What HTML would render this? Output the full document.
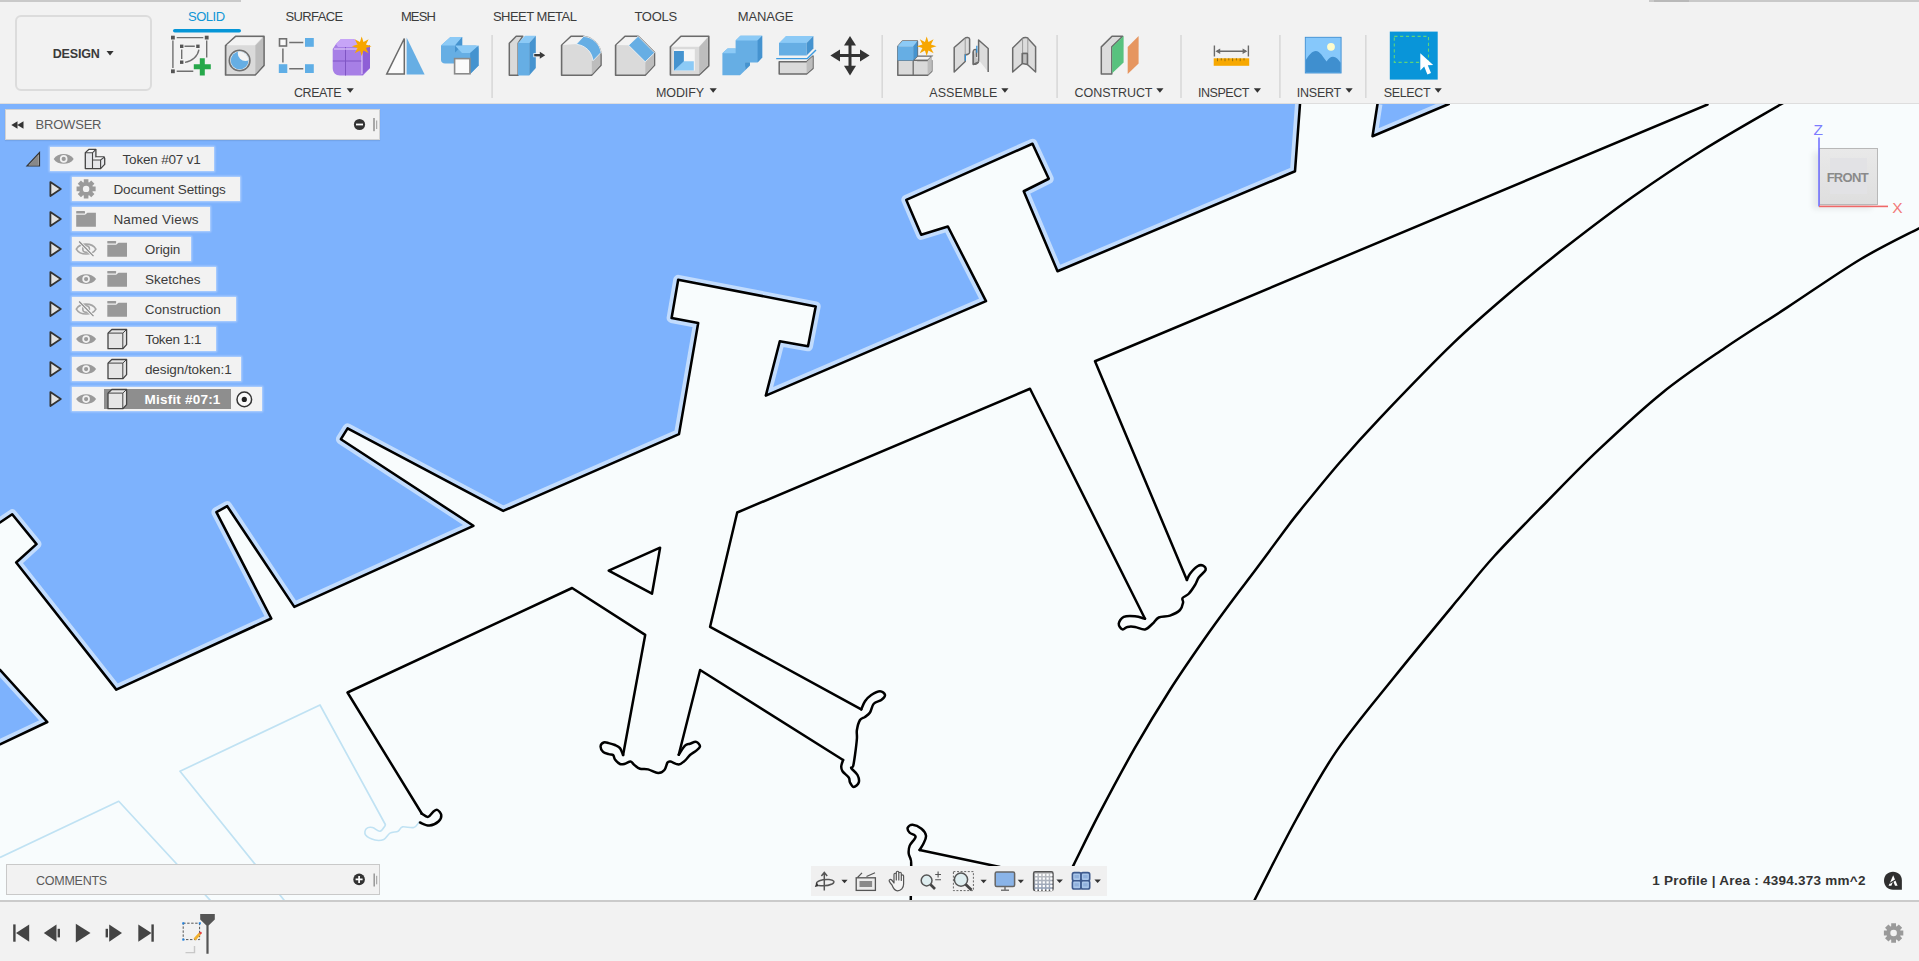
<!DOCTYPE html>
<html><head><meta charset="utf-8"><title>Fusion</title>
<style>
html,body{margin:0;padding:0;}
body{width:1919px;height:961px;overflow:hidden;position:relative;background:#f2f2f2;font-family:"Liberation Sans",sans-serif;}
.abs{position:absolute;left:0;top:0;}
.t{position:absolute;white-space:pre;line-height:1.15;}
.box{position:absolute;box-sizing:border-box;}
</style></head><body>
<svg class="abs" width="1919" height="961" viewBox="0 0 1919 961">
<defs><clipPath id="vpc"><rect x="0" y="104" width="1919" height="796"/></clipPath>
<clipPath id="c1"><path d="M0 104L1300 104L1295 171.25L1057.5 271.25L1023.75 191.25L1048.75 178.75L1032.5 143.75L906.3 199.9L921.2 234.8L947.9 226.5L986 301.2L765.8 395.6L779.8 341.3L808 346.3L815.7 306.4L678.2 279.8L671.6 318L698.2 323L679 434.1L503.2 510.9L347.6 428.4L340.9 439.2L473.4 525.8L294.3 606.9L227.2 506.2L216.4 512.2L271.3 618.5L116.3 689.6L16.2 562.5L36.5 544.1L12.2 514.3L0 522.5Z"/></clipPath>
<clipPath id="c2"><path d="M1377.5 104L1372.5 136.25L1448.75 104Z"/></clipPath>
<clipPath id="c3"><path d="M0 669.9L47.3 722L0 744.3Z"/></clipPath>
</defs><g clip-path="url(#vpc)">
<rect x="0" y="104" width="1919" height="796" fill="#f8fcfd"/>
<path d="M0 104L1300 104L1295 171.25L1057.5 271.25L1023.75 191.25L1048.75 178.75L1032.5 143.75L906.3 199.9L921.2 234.8L947.9 226.5L986 301.2L765.8 395.6L779.8 341.3L808 346.3L815.7 306.4L678.2 279.8L671.6 318L698.2 323L679 434.1L503.2 510.9L347.6 428.4L340.9 439.2L473.4 525.8L294.3 606.9L227.2 506.2L216.4 512.2L271.3 618.5L116.3 689.6L16.2 562.5L36.5 544.1L12.2 514.3L0 522.5Z" fill="#7db2fd"/>
<path d="M1300 104L1295 171.25L1057.5 271.25L1023.75 191.25L1048.75 178.75L1032.5 143.75L906.3 199.9L921.2 234.8L947.9 226.5L986 301.2L765.8 395.6L779.8 341.3L808 346.3L815.7 306.4L678.2 279.8L671.6 318L698.2 323L679 434.1L503.2 510.9L347.6 428.4L340.9 439.2L473.4 525.8L294.3 606.9L227.2 506.2L216.4 512.2L271.3 618.5L116.3 689.6L16.2 562.5L36.5 544.1L12.2 514.3L0 522.5" fill="none" stroke="#c2dcfd" stroke-width="10" stroke-linejoin="round" clip-path="url(#c1)"/>
<path d="M1377.5 104L1372.5 136.25L1448.75 104Z" fill="#7db2fd"/>
<path d="M1377.5 104L1372.5 136.25L1448.75 104" fill="none" stroke="#c2dcfd" stroke-width="10" stroke-linejoin="round" clip-path="url(#c2)"/>
<path d="M0 669.9L47.3 722L0 744.3Z" fill="#7db2fd"/>
<path d="M0 669.9L47.3 722L0 744.3" fill="none" stroke="#c2dcfd" stroke-width="10" stroke-linejoin="round" clip-path="url(#c3)"/>
<path d="M288 905L180 771.25L320 705L385.6 825" fill="none" stroke="#c0e2f3" stroke-width="1.7" stroke-linejoin="round"/>
<path d="M385.6 825C384.67 826.04 382.18 830.83 380 831.25C377.82 831.67 374.79 827.92 372.5 827.5C370.21 827.08 367.4 827.5 366.25 828.75C365.1 830 364.14 833.12 365.6 835C367.06 836.88 371.98 839.27 375 840C378.02 840.73 381.25 840.55 383.75 839.4C386.25 838.25 387.61 834.46 390 833.1C392.39 831.74 396.02 832.28 398.1 831.25C400.18 830.22 399.89 827.52 402.5 826.9C405.11 826.27 410.93 828.33 413.75 827.5C416.57 826.67 418.46 822.83 419.4 821.9" fill="none" stroke="#c0e2f3" stroke-width="1.6" stroke-linejoin="round"/>
<path d="M0 857.5L118.75 801.25L214.6 905" fill="none" stroke="#c0e2f3" stroke-width="1.7" stroke-linejoin="round"/>
<path d="M1300 104L1295 171.25L1057.5 271.25L1023.75 191.25L1048.75 178.75L1032.5 143.75L906.3 199.9L921.2 234.8L947.9 226.5L986 301.2L765.8 395.6L779.8 341.3L808 346.3L815.7 306.4L678.2 279.8L671.6 318L698.2 323L679 434.1L503.2 510.9L347.6 428.4L340.9 439.2L473.4 525.8L294.3 606.9L227.2 506.2L216.4 512.2L271.3 618.5L116.3 689.6L16.2 562.5L36.5 544.1L12.2 514.3L0 522.5" stroke="#000" fill="none" stroke-linejoin="round" stroke-linecap="round" stroke-width="2.55"/>
<path d="M1377.5 104L1372.5 136.25L1448.75 104" stroke="#000" fill="none" stroke-linejoin="round" stroke-linecap="round" stroke-width="2.55"/>
<path d="M0 669.9L47.3 722L0 744.3" stroke="#000" fill="none" stroke-linejoin="round" stroke-linecap="round" stroke-width="2.55"/>
<path d="M420 822.5C421.57 823.02 426.27 825.81 429.4 825.6C432.52 825.39 436.77 823.02 438.75 821.25C440.73 819.48 441.46 816.88 441.25 815C441.04 813.12 438.75 810.62 437.5 810C436.25 809.38 435.32 810.1 433.75 811.25C432.18 812.4 430.08 816.48 428.1 816.9C426.12 817.32 422.93 814.27 421.9 813.75C420.87 813.23 421.9 813.75 421.9 813.75" stroke="#000" fill="none" stroke-linejoin="round" stroke-linecap="round" stroke-width="2.5"/>
<path d="M421.9 813.75L347.5 692.5L572.1 588L645.2 634.9L623.1 755" stroke="#000" fill="none" stroke-linejoin="round" stroke-linecap="round" stroke-width="2.5"/>
<path d="M623.1 755C622.58 753.85 621.35 749.77 620 748.1C618.65 746.43 616.88 745.83 615 745C613.12 744.17 610.62 743.52 608.75 743.1C606.88 742.68 605.11 741.98 603.75 742.5C602.39 743.02 600.71 744.68 600.6 746.25C600.49 747.82 601.74 750.59 603.1 751.9C604.46 753.21 607.08 753.58 608.75 754.1C610.42 754.62 612.06 754.12 613.1 755C614.14 755.88 613.85 757.9 615 759.4C616.15 760.9 618.33 763.27 620 764C621.67 764.73 623.23 764.15 625 763.75C626.77 763.35 629.03 761.39 630.6 761.6C632.17 761.81 632.83 763.81 634.4 765C635.97 766.19 637.72 768.02 640 768.75C642.28 769.48 645.08 768.67 648.1 769.4C651.12 770.12 655.38 773 658.1 773.1C660.82 773.2 662.83 771.77 664.4 770C665.97 768.23 666.47 763.9 667.5 762.5C668.53 761.1 668.73 761.28 670.6 761.6C672.48 761.92 676.35 764.57 678.75 764.4C681.15 764.23 683.12 762.17 685 760.6C686.88 759.03 688.12 756.67 690 755C691.88 753.33 694.58 752.06 696.25 750.6C697.92 749.14 700 747.7 700 746.25C700 744.8 697.92 742.32 696.25 741.9C694.58 741.48 691.88 743.13 690 743.75C688.12 744.37 686.88 743.77 685 745.6C683.12 747.43 679.79 753.18 678.75 754.7" stroke="#000" fill="none" stroke-linejoin="round" stroke-linecap="round" stroke-width="2.5"/>
<path d="M678.75 754.7L700.1 670L843.1 760" stroke="#000" fill="none" stroke-linejoin="round" stroke-linecap="round" stroke-width="2.5"/>
<path d="M861.25 709.4C861.88 708.04 863.33 703.65 865 701.25C866.67 698.85 868.75 696.67 871.25 695C873.75 693.33 877.71 691.25 880 691.25C882.29 691.25 884.79 693.54 885 695C885.21 696.46 883.12 698.54 881.25 700C879.38 701.46 875.62 701.67 873.75 703.75C871.88 705.83 871.46 710.31 870 712.5C868.54 714.69 866.67 715.65 865 716.9C863.33 718.15 861.35 717.82 860 720C858.65 722.18 857.42 726.88 856.9 730C856.38 733.12 857.22 734.58 856.9 738.75C856.58 742.92 855.63 750.42 855 755C854.37 759.58 853.73 764.07 853.1 766.25C852.48 768.43 850.52 766.64 851.25 768.1C851.98 769.56 856.25 772.6 857.5 775C858.75 777.4 859.38 780.52 858.75 782.5C858.12 784.48 855.21 786.9 853.75 786.9C852.29 786.9 850.83 784.07 850 782.5C849.17 780.93 850 779.38 848.75 777.5C847.5 775.62 843.75 773.12 842.5 771.25C841.25 769.38 841.15 768.12 841.25 766.25C841.35 764.38 842.79 761.04 843.1 760" stroke="#000" fill="none" stroke-linejoin="round" stroke-linecap="round" stroke-width="2.5"/>
<path d="M861.25 709.4L710.1 626.8L737.2 512.5L1030 388.75L1145 618.75" stroke="#000" fill="none" stroke-linejoin="round" stroke-linecap="round" stroke-width="2.5"/>
<path d="M1145 618.75C1143.33 618.33 1138.54 616.56 1135 616.25C1131.46 615.94 1126.46 615.65 1123.75 616.9C1121.04 618.15 1118.96 621.67 1118.75 623.75C1118.54 625.83 1121.04 628.88 1122.5 629.4C1123.96 629.92 1125.42 627.32 1127.5 626.9C1129.58 626.48 1132.08 626.48 1135 626.9C1137.92 627.32 1142.08 629.92 1145 629.4C1147.92 628.88 1150.21 625.73 1152.5 623.75C1154.79 621.77 1155.83 618.86 1158.75 617.5C1161.67 616.14 1166.46 616.85 1170 615.6C1173.54 614.35 1177.82 612.18 1180 610C1182.18 607.82 1182.68 604.48 1183.1 602.5C1183.52 600.52 1181.56 599.56 1182.5 598.1C1183.44 596.64 1186.67 595.93 1188.75 593.75C1190.83 591.57 1193.33 587.71 1195 585C1196.67 582.29 1196.98 580 1198.75 577.5C1200.52 575 1204.88 571.98 1205.6 570C1206.32 568.02 1204.45 566.23 1203.1 565.6C1201.75 564.98 1199.68 564.89 1197.5 566.25C1195.32 567.61 1191.77 571.46 1190 573.75C1188.23 576.04 1187.42 578.96 1186.9 580" stroke="#000" fill="none" stroke-linejoin="round" stroke-linecap="round" stroke-width="2.5"/>
<path d="M1186.9 580L1095 361.25L1707.5 104.5" stroke="#000" fill="none" stroke-linejoin="round" stroke-linecap="round" stroke-width="2.5"/>
<path d="M608.7 570.7L660.1 547.7L652 593.7Z" stroke="#000" fill="none" stroke-linejoin="round" stroke-linecap="round" stroke-width="2.5"/>
<path d="M910.7 905C910.78 898.4 911.2 872.98 911.2 865.4C911.2 857.82 911.12 861.48 910.7 859.5C910.28 857.52 908.87 855.82 908.7 853.5C908.53 851.18 908.55 848.4 909.7 845.6C910.85 842.8 915.6 838.84 915.6 836.7C915.6 834.56 911.02 834.23 909.7 832.75C908.38 831.27 907.22 829.12 907.7 827.8C908.18 826.47 910.3 824.63 912.6 824.8C914.9 824.97 919.27 826.98 921.5 828.8C923.73 830.62 925.67 833.23 926 835.7C926.33 838.17 924.57 841.22 923.5 843.6C922.43 845.98 920.25 848.93 919.6 850" stroke="#000" fill="none" stroke-linejoin="round" stroke-linecap="round" stroke-width="2.5"/>
<path d="M919.6 850L1000 867" stroke="#000" fill="none" stroke-linejoin="round" stroke-linecap="round" stroke-width="2.5"/>
<path d="M1790 99C1788.28 100 1794.18 96.5 1779.7 105C1765.22 113.5 1727.52 134.73 1703.1 150C1678.68 165.27 1655.97 180.5 1633.2 196.6C1610.43 212.7 1586.5 231.05 1566.5 246.6C1546.5 262.15 1532.07 273.8 1513.2 289.9C1494.33 306 1475.5 321.83 1453.3 343.2C1431.1 364.57 1398.92 398.22 1380 418.1C1361.08 437.98 1353.08 447.08 1339.75 462.5C1326.42 477.92 1309.12 499.35 1300 510.6C1290.88 521.85 1292.43 520.1 1285 530C1277.57 539.9 1264.12 558.33 1255.4 570C1246.68 581.67 1241.32 588.33 1232.7 600C1224.08 611.67 1214.17 625 1203.7 640C1193.23 655 1181.4 671.97 1169.9 690C1158.4 708.03 1146.43 727.67 1134.7 748.2C1122.97 768.73 1109.65 793.8 1099.5 813.2C1089.35 832.6 1078.72 854.8 1073.8 864.6C1068.88 874.4 1070.63 870.77 1070 872" stroke="#000" fill="none" stroke-linejoin="round" stroke-linecap="round" stroke-width="2.5"/>
<path d="M1930 223C1928.17 223.88 1930.65 222.22 1919 228.3C1907.35 234.38 1882.05 246.32 1860.1 259.5C1838.15 272.68 1809.85 292.65 1787.3 307.4C1764.75 322.15 1745.62 333.78 1724.8 348C1703.98 362.22 1683.45 375.72 1662.4 392.7C1641.35 409.68 1617.82 431.68 1598.5 449.9C1579.18 468.12 1563.85 484.32 1546.5 502C1529.15 519.68 1509.23 539.67 1494.4 556C1479.57 572.33 1474.32 579.67 1457.5 600C1440.68 620.33 1413.53 653.02 1393.5 678C1373.47 702.98 1353.43 726.48 1337.3 749.9C1321.17 773.32 1310.48 793.48 1296.7 818.5C1282.92 843.52 1262.38 884.75 1254.6 900C1246.82 915.25 1250.77 908.33 1250 910" stroke="#000" fill="none" stroke-linejoin="round" stroke-linecap="round" stroke-width="2.5"/>
</g></svg>
<div class="box" style="left:0;top:0;width:1919px;height:104px;background:#f2f2f2;border-bottom:1px solid #dedede"></div>
<div class="box" style="left:0;top:0;width:241px;height:2px;background:#c9c9c9"></div>
<div class="box" style="left:1649px;top:0;width:270px;height:2px;background:#c9c9c9"></div>
<div class="box" style="left:1654px;top:0;width:35px;height:2px;background:#b9b9b9"></div>
<div class="box" style="left:14.5px;top:15px;width:137px;height:76px;border:2px solid #dcdcdc;border-radius:6px"></div>
<div class="box" style="left:5px;top:109px;width:375px;height:31px;background:#f2f2f2;border:1px solid #d2d2d2;box-shadow:0 1px 1px rgba(0,0,0,0.08)"></div>
<div class="box" style="left:50.0px;top:146.9px;width:163.8px;height:24.4px;background:#f2f2f2;box-shadow:0 0 2px 1px rgba(230,240,255,0.55)"></div>
<div class="box" style="left:72.3px;top:176.9px;width:167.3px;height:24.4px;background:#f2f2f2;box-shadow:0 0 2px 1px rgba(230,240,255,0.55)"></div>
<div class="box" style="left:72.3px;top:206.9px;width:137.5px;height:24.4px;background:#f2f2f2;box-shadow:0 0 2px 1px rgba(230,240,255,0.55)"></div>
<div class="box" style="left:72.3px;top:236.9px;width:118.7px;height:24.4px;background:#f2f2f2;box-shadow:0 0 2px 1px rgba(230,240,255,0.55)"></div>
<div class="box" style="left:72.3px;top:266.9px;width:143.7px;height:24.4px;background:#f2f2f2;box-shadow:0 0 2px 1px rgba(230,240,255,0.55)"></div>
<div class="box" style="left:72.3px;top:296.9px;width:163.7px;height:24.4px;background:#f2f2f2;box-shadow:0 0 2px 1px rgba(230,240,255,0.55)"></div>
<div class="box" style="left:72.3px;top:326.9px;width:143.7px;height:24.4px;background:#f2f2f2;box-shadow:0 0 2px 1px rgba(230,240,255,0.55)"></div>
<div class="box" style="left:72.3px;top:356.9px;width:168.7px;height:24.4px;background:#f2f2f2;box-shadow:0 0 2px 1px rgba(230,240,255,0.55)"></div>
<div class="box" style="left:72.3px;top:386.9px;width:189.7px;height:24.4px;background:#f2f2f2;box-shadow:0 0 2px 1px rgba(230,240,255,0.55)"></div>
<div class="box" style="left:104.2px;top:389.4px;width:126.6px;height:19.4px;background:#8e8e8e"></div>
<div class="box" style="left:1819px;top:147.5px;width:58.5px;height:57.5px;background:linear-gradient(#e9e9e9,#dedede);border:1px solid #b8b8b8;box-shadow:-6px 4px 6px rgba(0,0,0,0.08)"></div>
<div class="box" style="left:1830px;top:158px;width:37px;height:36px;background:#e2e2e5"></div>
<div class="box" style="left:5.5px;top:864.2px;width:374px;height:30.4px;background:#f2f2f2;border:1px solid #c9c9c9"></div>
<div class="box" style="left:811px;top:866px;width:296px;height:30px;background:#f0f0f0"></div>
<div class="box" style="left:0;top:900px;width:1919px;height:61px;background:#f2f2f2;border-top:2px solid #cbcbcb"></div>
<svg class="abs" width="1919" height="961" viewBox="0 0 1919 961">
<path d="M106.5 51H113.6L110.05 55.6Z" fill="#333"/>
<rect x="173" y="29" width="68" height="3.6" rx="1.8" fill="#0696d7"/>
<path d="M346.60 88.2H353.80L350.20 92.8Z" fill="#333"/>
<path d="M709.60 88.2H716.80L713.20 92.8Z" fill="#333"/>
<path d="M1001.30 88.2H1008.50L1004.90 92.8Z" fill="#333"/>
<path d="M1156.30 88.2H1163.50L1159.90 92.8Z" fill="#333"/>
<path d="M1253.80 88.2H1261.00L1257.40 92.8Z" fill="#333"/>
<path d="M1345.50 88.2H1352.70L1349.10 92.8Z" fill="#333"/>
<path d="M1434.60 88.2H1441.80L1438.20 92.8Z" fill="#333"/>
<rect x="491.3" y="35" width="1.6" height="63" fill="#d9d9d9"/>
<rect x="881.4" y="35" width="1.6" height="63" fill="#d9d9d9"/>
<rect x="1056.3" y="35" width="1.6" height="63" fill="#d9d9d9"/>
<rect x="1180.2" y="35" width="1.6" height="63" fill="#d9d9d9"/>
<rect x="1279.1" y="35" width="1.6" height="63" fill="#d9d9d9"/>
<rect x="1365.0" y="35" width="1.6" height="63" fill="#d9d9d9"/>
<g>
<path d="M176.7 37.6H203.3M172.9 40.5V68M206.7 40.5V57.6M176.7 71.3H193.3M184.5 46.3H194.8M181.7 49.5V59" stroke="#707070" stroke-width="1.4" fill="none"/>
<path d="M198.9 49.7C198 56 192 61.5 185 62.4" stroke="#707070" stroke-width="1.4" fill="none"/>
<g fill="#555"><rect x="171" y="35.7" width="3.8" height="3.8"/><rect x="204.8" y="35.7" width="3.8" height="3.8"/><rect x="171" y="69.4" width="3.8" height="3.8"/>
<rect x="180" y="44.6" width="3.4" height="3.4"/><rect x="196.2" y="44.6" width="3.4" height="3.4"/><rect x="180" y="60.5" width="3.4" height="3.4"/></g>
<path d="M193.8 66.8H210.8M202.3 58.3V75.5" stroke="#26a84a" stroke-width="5"/>
</g>
<g>
<path d="M225.6 45.6L235.6 36.4H264V65.4L255.2 75H225.6Z" fill="#dadada" stroke="#6b6b6b" stroke-width="1.7" stroke-linejoin="round"/>
<path d="M226.6 45.2L236 37.3H262.5L254.9 45.2Z" fill="#f3f3f3"/>
<path d="M255.4 45.6L263.2 37.4V65L255.4 73.9Z" fill="#bdbdbd"/>
<circle cx="239.6" cy="60.5" r="10.3" fill="#f2f2f2" stroke="#707070" stroke-width="1.6"/>
<clipPath id="ex2"><circle cx="239.6" cy="60.5" r="8.9"/></clipPath>
<circle cx="239.6" cy="60.5" r="8.9" fill="#66aee4"/>
<circle cx="245.4" cy="53.4" r="7.6" fill="#f4f4f4" clip-path="url(#ex2)"/>
</g>
<g>
<path d="M289.2 42.6H303.3M282.9 48.4V62.6M289.2 68.8H303.3" stroke="#707070" stroke-width="1.5"/>
<rect x="279.5" y="38.8" width="7" height="7.2" fill="#fafafa" stroke="#707070" stroke-width="1.6"/>
<rect x="305" y="38" width="8.8" height="8.8" fill="#5faee6"/>
<rect x="278.8" y="64.2" width="8.5" height="8.8" fill="#5faee6"/>
<rect x="305" y="64.2" width="8.8" height="8.8" fill="#5faee6"/>
</g>
<g>
<path d="M336 44L341 39H352C355 39 357 41 357 44V49L370 49V68L363 75.5H340C335.5 75.5 332.7 72.5 332.7 68V49Z" fill="#a77fe6"/>
<path d="M336 44L341 39H352C355 39 357 41 357 44V47H338Z" fill="#c6a4f7"/>
<path d="M362 49L370 45V68L362 75Z" fill="#8e5fd6"/>
<path d="M332.9 61H362M345.5 47V75.5" stroke="#7f55c4" stroke-width="1"/>
<path d="M334 49H362V74" stroke="#e6d6fb" stroke-width="1" fill="none"/>
<polygon points="361.70,36.50 363.46,42.05 368.63,39.37 365.95,44.54 371.50,46.30 365.95,48.06 368.63,53.23 363.46,50.55 361.70,56.10 359.94,50.55 354.77,53.23 357.45,48.06 351.90,46.30 357.45,44.54 354.77,39.37 359.94,42.05" fill="#f7a600"/>
</g>
<g>
<path d="M386.8 73.9L404.3 38.5V73.9Z" fill="#fbfbfb" stroke="#6b6b6b" stroke-width="1.5" stroke-linejoin="miter"/>
<path d="M406.6 37.4L424.6 74.4H406.6Z" fill="#66aee4"/>
</g>
<g>
<path d="M441 45.5L450.4 36.9H462.2V45.5H475C477 45.5 478.6 47 478.6 49V65.5L470.2 74V58H461.6V63.6H445C442.8 63.6 441 62 441 60Z" fill="#66aee4"/>
<path d="M441 45.5L450.4 36.9H462.2L455 45.5Z" fill="#8ccaf6"/>
<path d="M462.2 36.9V45.5L455 52.5V45.5Z" fill="#4593cf"/>
<path d="M455 45.5H478.6L470.2 53H462Z" fill="#8ccaf6"/>
<path d="M470.2 53L478.6 45.5V65.5L470.2 74Z" fill="#4593cf"/>
<rect x="454.6" y="58.6" width="15.3" height="15.2" fill="#fafafa" stroke="#8a8a8a" stroke-width="1.6"/>
</g>
<g>
<path d="M509.3 75.2V43.2L516.2 36.2H522.8L518.2 43.2V75.2Z" fill="#dadada" stroke="#6b6b6b" stroke-width="1.5" stroke-linejoin="round"/>
<path d="M518 43L525 35.8H535.8L529.2 43Z" fill="#8ccaf6"/>
<path d="M518 43H529.2V75.5H518Z" fill="#66aee4"/>
<path d="M529.2 43L535.8 35.8V67.9L529.2 75.5Z" fill="#4593cf"/>
<path d="M533.4 55.2H541" stroke="#fafafa" stroke-width="4"/>
<path d="M534.2 55.2H541" stroke="#3a3a3a" stroke-width="2.4"/>
<path d="M539.8 51.7L545.2 55.2L539.8 58.7Z" fill="#3a3a3a"/>
</g>
<g>
<path d="M561.6 75.3V45.3L571 36.2H583C592 37 600.5 45 601 55V65.3L591.6 75.3Z" fill="#dadada" stroke="#6b6b6b" stroke-width="1.6" stroke-linejoin="round"/>
<path d="M562.6 45L571.4 37.2H583L577 44Z" fill="#f3f3f3"/>
<path d="M591.8 61L600.3 53V65L591.8 74.4Z" fill="#bdbdbd"/>
<path d="M576.3 44.2L583.5 36.4C592.5 37 600 44 601 52.5L593 60.8C592 52 586 45.5 576.3 44.2Z" fill="#66aee4" stroke="#f5f5f5" stroke-width="0.8"/>
</g>
<g>
<path d="M615.6 75.3V45.3L625 36.2H638.2L654.5 52.6V65.3L645.2 75.3Z" fill="#dadada" stroke="#6b6b6b" stroke-width="1.6" stroke-linejoin="round"/>
<path d="M616.6 45L625.4 37.2H637.6L628.6 45.2Z" fill="#f3f3f3"/>
<path d="M645.4 61.8L654 53V65L645.4 74.4Z" fill="#bdbdbd"/>
<path d="M628.6 45.3L638.1 36.3L654.5 52.8L645.2 61.8Z" fill="#66aee4" stroke="#f5f5f5" stroke-width="0.8"/>
</g>
<g>
<path d="M670.4 75V46.9L680.9 36.2H708.8V65.8L699.2 75Z" fill="#dadada" stroke="#6b6b6b" stroke-width="1.6" stroke-linejoin="round"/>
<path d="M671.4 46.7L681.3 37.2H707.5L699 46.7Z" fill="#f4f4f4"/>
<path d="M699.2 46.9L707.9 37.4V65.5L699.2 74.2Z" fill="#bdbdbd"/>
<rect x="673.8" y="49.2" width="21" height="21.4" fill="#f6f6f6"/>
<path d="M674 70.4V51H683.8V61.2H693.8V70.4Z" fill="#8ccaf6"/>
<path d="M674 51H683.8V61.2L674 70.4Z" fill="#4593cf"/>
</g>
<g>
<path d="M722.4 75.2V53.2L727.6 48.6H735.6V40.6L740.4 35.8H762.2V57.4L757.4 62.4H745.2V70.2L740 75.2Z" fill="#66aee4"/>
<path d="M722.4 53.2L727.6 48.6H735.6V53.2Z" fill="#8ccaf6"/>
<path d="M735.6 40.6L740.4 35.8H762.2L757.6 40.6Z" fill="#8ccaf6"/>
<path d="M757.6 40.6L762.2 35.8V57.4L757.6 62.4Z" fill="#4593cf"/>
<path d="M745.2 62.4H750L745.2 67Z" fill="#4593cf"/>
<path d="M745.2 62.4L750 62.4V65.5L745.2 70.2Z" fill="#4593cf"/>
</g>
<g>
<path d="M779.2 61.8H806.6L813 56V68.4L806.6 74H779.2Z" fill="#dadada" stroke="#6b6b6b" stroke-width="1.5" stroke-linejoin="round"/>
<path d="M806.6 62L812.6 56.4V68.2L806.6 73.4Z" fill="#bdbdbd"/>
<path d="M779 42.9L785.9 35.9H813.4L806.6 42.9Z" fill="#8ccaf6"/>
<rect x="779" y="42.9" width="27.6" height="12.6" fill="#66aee4"/>
<path d="M806.6 42.9L813.4 35.9V48.6L806.6 55.5Z" fill="#4593cf"/>
<path d="M776.2 58.6H807.4L816 50" stroke="#3d9be0" stroke-width="1.4" fill="none"/>
</g>
<g fill="#333">
<rect x="848.5" y="43" width="3" height="25"/><rect x="837.5" y="54" width="25" height="3"/>
<path d="M844 45.5L850 36L856 45.5Z"/><path d="M844 65.7L850 75.5L856 65.7Z"/>
<path d="M840 49.6L830.4 55.5L840 61.4Z"/><path d="M860 49.6L869.6 55.5L860 61.4Z"/>
</g>
<g>
<path d="M897.8 75.3V46.4L902.6 41.1H917.4V60.4H931.8V71.1L927.6 75.3Z" fill="#dadada" stroke="#6b6b6b" stroke-width="1.5" stroke-linejoin="round"/>
<path d="M913.2 60.4L917.6 56.1H931.9L927.6 60.4Z" fill="#f3f3f3" stroke="#6b6b6b" stroke-width="1.2"/>
<path d="M927.6 60.4L931.9 56.1V71.1L927.6 75.3Z" fill="#bdbdbd"/>
<path d="M913.2 60.4V75.3M897.8 60.4H927.6" stroke="#6b6b6b" stroke-width="1.3"/>
<rect x="897.6" y="46.3" width="15.6" height="14.2" fill="#66aee4"/>
<path d="M897.6 46.3L902.4 41.1H917.4L913.2 46.3Z" fill="#8ccaf6"/>
<path d="M913.2 46.3L917.4 41.1V56L913.2 60.5Z" fill="#4593cf"/>
<polygon points="926.70,36.50 928.46,42.05 933.63,39.37 930.95,44.54 936.50,46.30 930.95,48.06 933.63,53.23 928.46,50.55 926.70,56.10 924.94,50.55 919.77,53.23 922.45,48.06 916.90,46.30 922.45,44.54 919.77,39.37 924.94,42.05" fill="#f7a600"/>
</g>
<g stroke="#6b6b6b" stroke-width="1.5" stroke-linejoin="round">
<path d="M954.2 72V47.5L964.8 38.3C966 37.2 969.6 37.2 969.6 39V52.5C969.6 54 966.5 54.8 965.2 54.6V61.5L954.2 72Z" fill="#dcdcdc"/>
<path d="M965.2 54.6V38.5" stroke="#9a9a9a" stroke-width="1"/>
<path d="M988.2 72V48.5L978.6 40V61.6C978.6 63.5 975 64.5 973.3 64V51.5C973.3 49.5 975 49.2 976.4 49.6V57" fill="#dcdcdc"/>
<path d="M973.3 51.5V64.5L978.6 62" fill="#c4c4c4"/>
</g>
<path d="M965.4 54.5V60.8M976.8 45.8V52.8" stroke="#2f8fd6" stroke-width="1.2"/>
<g stroke="#6b6b6b" stroke-width="1.5" stroke-linejoin="round">
<path d="M1012.7 72V48L1022.6 38.3C1023.6 37.2 1028 37.2 1028 38.6L1035.6 46.8V72L1027.4 64.5V53.5H1022.4V63.5Z" fill="#dcdcdc"/>
<path d="M1022.6 38.6V53.4M1027.8 38.8V53" stroke="#9a9a9a" stroke-width="1"/>
<path d="M1022.4 53.5H1027.4V64.5L1022.4 63.5Z" fill="#c2c2c2"/>
</g>
<g>
<path d="M1101.3 73.9V46.9L1112 36.3H1122.6L1111.8 46.9V73.9Z" fill="#dcdcdc" stroke="#6b6b6b" stroke-width="1.5" stroke-linejoin="round"/>
<path d="M1112.2 46.9L1123.6 36V62.4L1112.2 73.3Z" fill="#58c27e"/>
<path d="M1127.7 46.9L1138.6 36V63.6L1127.7 73.9Z" fill="#e69660"/>
</g>
<g>
<path d="M1214.4 45.4V56.6M1248.4 45.4V56.6M1217 51.3H1246" stroke="#6a6a6a" stroke-width="1.4"/>
<path d="M1215.4 51.3L1220.2 48.6V54Z M1247.4 51.3L1242.6 48.6V54Z" fill="#6a6a6a"/>
<rect x="1213.7" y="58.3" width="35.5" height="7.5" fill="#f7a800"/>
<path d="M1217.5 58.3V61.2M1221.3 58.3V60.4M1225 58.3V61.2M1228.8 58.3V60.4M1232.6 58.3V61.2M1236.4 58.3V60.4M1240.2 58.3V61.2M1244 58.3V60.4" stroke="#8a6a10" stroke-width="0.9"/>
</g>
<g>
<rect x="1305.3" y="37.3" width="35.8" height="35.7" fill="#86c8fb" stroke="#3f8ed2" stroke-width="0.9"/>
<path d="M1305.8 60C1309 55 1312 51 1315.8 51C1320 51 1323 57 1326.6 61.6C1328.5 58.5 1330.5 56.8 1333 56.8C1336 56.8 1338.6 59.5 1340.6 62.8V72.5H1305.8Z" fill="#3f8fcf"/>
<circle cx="1331" cy="46.8" r="3.9" fill="#fdfccc"/>
</g>
<g>
<rect x="1389.8" y="31.6" width="47.9" height="48" fill="#0995d9"/>
<rect x="1394.3" y="36.4" width="34.2" height="26" fill="none" stroke="#5fd47a" stroke-width="1.1" stroke-dasharray="3.2 2.6"/>
<path d="M1420.3 53.2V70.4L1424.2 66.6L1427.4 74.5L1431 73L1427.8 65.2L1433.2 65Z" fill="#fff"/>
</g>
<path d="M11.3 125L17.5 121.3V128.7ZM17.3 125L23.5 121.3V128.7Z" fill="#333"/>
<circle cx="359.5" cy="124.5" r="5.6" fill="#333"/><rect x="356" y="123.6" width="7" height="1.8" fill="#fff"/>
<rect x="373.4" y="118" width="1.2" height="13.2" fill="#777"/><rect x="376.2" y="120.5" width="1" height="8.5" fill="#999"/>
<path d="M27 166L39.5 152.5V166Z" fill="#b9b9b9" stroke="#333" stroke-width="1.2"/>
<path d="M28.5 165L38.5 155V165Z" fill="#888"/>
<g><path d="M53.70 158.90C57.70 152.40 69.70 152.40 73.70 158.90C69.70 165.40 57.70 165.40 53.70 158.90Z" fill="#9a9a9a"/><circle cx="63.70" cy="158.90" r="3.8" fill="#f2f2f2"/><circle cx="63.70" cy="158.90" r="2.1" fill="#9a9a9a"/></g>
<path d="M85.3 152.8L89.1 149.3H95.9V156.9H103.8L104.7 158.4V164.4L100.6 168.6H85.3Z" fill="#e6e7ea" stroke="#454545" stroke-width="1.3" stroke-linejoin="round"/>
<path d="M86 152.9H92.4L95.3 150H89.4Z M92.6 160.1H100.6L104 157.4H96Z" fill="#fafafa"/>
<path d="M85.3 152.8H92.5L95.9 149.3M92.5 152.8V168.6M92.5 160H100.6L104.7 156.9M100.6 160V168.6" stroke="#454545" stroke-width="1.1" fill="none"/>
<path d="M50.4 182.10L60.8 189.10L50.4 196.10Z" fill="#e3e3e3" stroke="#333" stroke-width="1.8" stroke-linejoin="round"/>
<path d="M50.4 212.10L60.8 219.10L50.4 226.10Z" fill="#e3e3e3" stroke="#333" stroke-width="1.8" stroke-linejoin="round"/>
<path d="M50.4 242.10L60.8 249.10L50.4 256.10Z" fill="#e3e3e3" stroke="#333" stroke-width="1.8" stroke-linejoin="round"/>
<path d="M50.4 272.10L60.8 279.10L50.4 286.10Z" fill="#e3e3e3" stroke="#333" stroke-width="1.8" stroke-linejoin="round"/>
<path d="M50.4 302.10L60.8 309.10L50.4 316.10Z" fill="#e3e3e3" stroke="#333" stroke-width="1.8" stroke-linejoin="round"/>
<path d="M50.4 332.10L60.8 339.10L50.4 346.10Z" fill="#e3e3e3" stroke="#333" stroke-width="1.8" stroke-linejoin="round"/>
<path d="M50.4 362.10L60.8 369.10L50.4 376.10Z" fill="#e3e3e3" stroke="#333" stroke-width="1.8" stroke-linejoin="round"/>
<path d="M50.4 392.10L60.8 399.10L50.4 406.10Z" fill="#e3e3e3" stroke="#333" stroke-width="1.8" stroke-linejoin="round"/>
<polygon points="83.80,182.29 83.80,179.37 88.40,179.37 88.40,182.29 89.15,182.60 91.21,180.54 94.46,183.79 92.40,185.85 92.71,186.60 95.63,186.60 95.63,191.20 92.71,191.20 92.40,191.95 94.46,194.01 91.21,197.26 89.15,195.20 88.40,195.51 88.40,198.43 83.80,198.43 83.80,195.51 83.05,195.20 80.99,197.26 77.74,194.01 79.80,191.95 79.49,191.20 76.57,191.20 76.57,186.60 79.49,186.60 79.80,185.85 77.74,183.79 80.99,180.54 83.05,182.60" fill="#9a9a9a"/><circle cx="86.10" cy="188.90" r="3.20" fill="#f2f2f2"/>
<path d="M76.20 214.70H85.00L87.40 212.80H95.90V226.70H76.20Z" fill="#999"/><rect x="76.20" y="210.90" width="8.8" height="2.6" rx="0.6" fill="#999"/>
<g fill="none" stroke="#a4a4a4" stroke-width="1.6"><path d="M76.30 249.10C80.10 242.50 92.10 242.50 95.90 249.10C92.10 255.70 80.10 255.70 76.30 249.10Z"/><circle cx="86.10" cy="249.10" r="3.3"/></g><path d="M79.10 241.50L93.50 256.10" stroke="#f2f2f2" stroke-width="3"/><path d="M79.10 241.50L93.50 256.10" stroke="#8a8a8a" stroke-width="1.2"/>
<path d="M107.30 244.70H116.10L118.50 242.80H127.00V256.70H107.30Z" fill="#999"/><rect x="107.30" y="240.90" width="8.8" height="2.6" rx="0.6" fill="#999"/>
<g><path d="M76.10 279.10C80.10 272.60 92.10 272.60 96.10 279.10C92.10 285.60 80.10 285.60 76.10 279.10Z" fill="#9a9a9a"/><circle cx="86.10" cy="279.10" r="3.8" fill="#f2f2f2"/><circle cx="86.10" cy="279.10" r="2.1" fill="#9a9a9a"/></g>
<path d="M107.30 274.70H116.10L118.50 272.80H127.00V286.70H107.30Z" fill="#999"/><rect x="107.30" y="270.90" width="8.8" height="2.6" rx="0.6" fill="#999"/>
<g fill="none" stroke="#a4a4a4" stroke-width="1.6"><path d="M76.30 309.10C80.10 302.50 92.10 302.50 95.90 309.10C92.10 315.70 80.10 315.70 76.30 309.10Z"/><circle cx="86.10" cy="309.10" r="3.3"/></g><path d="M79.10 301.50L93.50 316.10" stroke="#f2f2f2" stroke-width="3"/><path d="M79.10 301.50L93.50 316.10" stroke="#8a8a8a" stroke-width="1.2"/>
<path d="M107.30 304.70H116.10L118.50 302.80H127.00V316.70H107.30Z" fill="#999"/><rect x="107.30" y="300.90" width="8.8" height="2.6" rx="0.6" fill="#999"/>
<g><path d="M76.10 339.10C80.10 332.60 92.10 332.60 96.10 339.10C92.10 345.60 80.10 345.60 76.10 339.10Z" fill="#9a9a9a"/><circle cx="86.10" cy="339.10" r="3.8" fill="#f2f2f2"/><circle cx="86.10" cy="339.10" r="2.1" fill="#9a9a9a"/></g>
<path d="M108.00 333.10L111.80 329.50H126.60V344.60L122.80 348.70H108.00Z" fill="#e6e6e6" stroke="#444" stroke-width="1.3" stroke-linejoin="round"/><path d="M108.00 333.10H122.80L126.60 329.50M122.80 333.10V348.70" stroke="#444" stroke-width="1" fill="none"/>
<g><path d="M76.10 369.10C80.10 362.60 92.10 362.60 96.10 369.10C92.10 375.60 80.10 375.60 76.10 369.10Z" fill="#9a9a9a"/><circle cx="86.10" cy="369.10" r="3.8" fill="#f2f2f2"/><circle cx="86.10" cy="369.10" r="2.1" fill="#9a9a9a"/></g>
<path d="M108.00 363.10L111.80 359.50H126.60V374.60L122.80 378.70H108.00Z" fill="#e6e6e6" stroke="#444" stroke-width="1.3" stroke-linejoin="round"/><path d="M108.00 363.10H122.80L126.60 359.50M122.80 363.10V378.70" stroke="#444" stroke-width="1" fill="none"/>
<g><path d="M76.10 399.10C80.10 392.60 92.10 392.60 96.10 399.10C92.10 405.60 80.10 405.60 76.10 399.10Z" fill="#9a9a9a"/><circle cx="86.10" cy="399.10" r="3.8" fill="#f2f2f2"/><circle cx="86.10" cy="399.10" r="2.1" fill="#9a9a9a"/></g>
<path d="M108.00 393.10L111.80 389.50H126.60V404.60L122.80 408.70H108.00Z" fill="#e6e6e6" stroke="#444" stroke-width="1.3" stroke-linejoin="round"/><path d="M108.00 393.10H122.80L126.60 389.50M122.80 393.10V408.70" stroke="#444" stroke-width="1" fill="none"/>
<circle cx="244.3" cy="399.4" r="7.3" fill="#fafafa" stroke="#333" stroke-width="1.5"/><circle cx="244.3" cy="399.4" r="2.6" fill="#222"/>
<rect x="1818.2" y="137.5" width="1.6" height="69" fill="#7474ff"/>
<rect x="1819" y="205.6" width="69" height="1.6" fill="#ef6868"/>
<circle cx="359.1" cy="879.4" r="5.8" fill="#333"/><path d="M355.6 879.4H362.6M359.1 875.9V882.9" stroke="#fff" stroke-width="1.7"/>
<rect x="373.6" y="873.5" width="1.1" height="13" fill="#777"/><rect x="376.2" y="875.8" width="1" height="8.5" fill="#999"/>
<g fill="none" stroke="#555" stroke-width="1.5">
<path d="M824.3 872.5V890.5M821.4 876L824.3 872.5L827.2 876" />
<path d="M817 884.4C814.5 881.5 822 879 829 879.5C834 880 835.5 882 832 884C829 885.5 823 886 818.5 885.5" />
</g><path d="M816.5 882.5L814.8 887L819 886Z" fill="#333"/>
<path d="M841.4 879.8H847.6L844.5 883.3Z" fill="#333"/>
<g><rect x="856.2" y="877.8" width="19.2" height="12.6" fill="#ececec" stroke="#555" stroke-width="1.3"/>
<rect x="859.5" y="881" width="12.6" height="6" fill="#8a8a8a"/><path d="M857.5 877.5L862 872.8M866.5 876.5L875 872.8" stroke="#555" stroke-width="1.2"/></g>
<path d="M892 885C889 882 888.5 880 890 879.5C891.5 879 893 881.5 894 883V874.5C894 872.8 896.3 872.8 896.3 874.5V880V872.5C896.3 870.8 898.8 870.8 898.8 872.5V880V873.5C898.8 871.8 901.3 871.8 901.3 873.5V880.5V876C901.3 874.5 903.6 874.5 903.6 876V884C903.6 888 901 890.8 897.5 890.8C895 890.8 893.5 889 892 885Z" fill="#f5f5f5" stroke="#555" stroke-width="1.2" stroke-linejoin="round"/>
<g><circle cx="926.6" cy="880.5" r="5.4" fill="#dfeef0" stroke="#555" stroke-width="1.5"/><path d="M930.5 884.5L935 889" stroke="#444" stroke-width="2.6"/>
<path d="M935.2 874.5H941M938.1 871.6V877.4M935.2 879.8H941" stroke="#555" stroke-width="1.1"/></g>
<g><rect x="953.4" y="871.6" width="20" height="19" fill="none" stroke="#666" stroke-width="1" stroke-dasharray="2 1.6"/>
<circle cx="961" cy="879.6" r="6.6" fill="#dfeef0" stroke="#555" stroke-width="1.5"/><path d="M965.5 884.2L971.5 890" stroke="#444" stroke-width="2.8"/></g>
<path d="M980.5 879.8H986.7L983.6 883.3Z" fill="#333"/>
<g><rect x="995.2" y="872" width="19.4" height="14.6" rx="1.5" fill="#8ab4e8" stroke="#666" stroke-width="1.5"/><path d="M1001 890.2H1009M1005 887V890" stroke="#777" stroke-width="1.6"/></g>
<path d="M1017.7 879.8H1023.9L1020.8 883.3Z" fill="#333"/>
<defs><linearGradient id="gg" x1="0" y1="0" x2="0" y2="1"><stop offset="0" stop-color="#c4c4c4"/><stop offset="1" stop-color="#8e9cb4"/></linearGradient></defs>
<g><rect x="1033.6" y="871.8" width="19.4" height="18.8" rx="1.6" fill="url(#gg)" stroke="#555" stroke-width="1.5"/><rect x="1035.2" y="873.8" width="2.2" height="2.2" fill="#fff"/><rect x="1035.2" y="877.5" width="2.2" height="2.2" fill="#fff"/><rect x="1035.2" y="881.3" width="2.2" height="2.2" fill="#fff"/><rect x="1035.2" y="885.0" width="2.2" height="2.2" fill="#fff"/><rect x="1035.2" y="888.8" width="2.2" height="2.2" fill="#fff"/><rect x="1039.0" y="873.8" width="2.2" height="2.2" fill="#fff"/><rect x="1039.0" y="877.5" width="2.2" height="2.2" fill="#fff"/><rect x="1039.0" y="881.3" width="2.2" height="2.2" fill="#fff"/><rect x="1039.0" y="885.0" width="2.2" height="2.2" fill="#fff"/><rect x="1039.0" y="888.8" width="2.2" height="2.2" fill="#fff"/><rect x="1042.7" y="873.8" width="2.2" height="2.2" fill="#fff"/><rect x="1042.7" y="877.5" width="2.2" height="2.2" fill="#fff"/><rect x="1042.7" y="881.3" width="2.2" height="2.2" fill="#fff"/><rect x="1042.7" y="885.0" width="2.2" height="2.2" fill="#fff"/><rect x="1042.7" y="888.8" width="2.2" height="2.2" fill="#fff"/><rect x="1046.5" y="873.8" width="2.2" height="2.2" fill="#fff"/><rect x="1046.5" y="877.5" width="2.2" height="2.2" fill="#fff"/><rect x="1046.5" y="881.3" width="2.2" height="2.2" fill="#fff"/><rect x="1046.5" y="885.0" width="2.2" height="2.2" fill="#fff"/><rect x="1046.5" y="888.8" width="2.2" height="2.2" fill="#fff"/><rect x="1050.2" y="873.8" width="2.2" height="2.2" fill="#fff"/><rect x="1050.2" y="877.5" width="2.2" height="2.2" fill="#fff"/><rect x="1050.2" y="881.3" width="2.2" height="2.2" fill="#fff"/><rect x="1050.2" y="885.0" width="2.2" height="2.2" fill="#fff"/><rect x="1050.2" y="888.8" width="2.2" height="2.2" fill="#fff"/></g><path d="M1056.4 879.4H1062.9L1059.6 883.1Z" fill="#333"/>
<g stroke="#3e5b8e" stroke-width="1.6" fill="#a9c6ea"><rect x="1072.4" y="872.6" width="8.6" height="8.2" rx="1.8"/><rect x="1081.1" y="872.6" width="8.6" height="8.2" rx="1.8"/>
<rect x="1072.4" y="880.8" width="8.6" height="8.2" rx="1.8"/><rect x="1081.1" y="880.8" width="8.6" height="8.2" rx="1.8"/></g>
<g fill="#8fb0dc"><rect x="1074.5" y="875" width="4.4" height="3.2"/><rect x="1083.2" y="875" width="4.4" height="3.2"/><rect x="1074.5" y="883.2" width="4.4" height="3.2"/><rect x="1083.2" y="883.2" width="4.4" height="3.2"/></g>
<path d="M1094.4 879.4H1100.9L1097.6 883.1Z" fill="#333"/>
<path d="M1893 871.8C1898.2 871.8 1901.9 875.6 1901.9 880.6V889.7H1893C1887.8 889.7 1884 885.8 1884 880.7C1884 875.6 1887.8 871.8 1893 871.8Z" fill="#2f2f2f"/>
<path d="M1888.6 885.8L1893.2 875.2L1897.6 885.8H1895L1893.2 881L1891.4 885.8Z" fill="#fff"/><path d="M1889.5 883.5L1897 879" stroke="#2f2f2f" stroke-width="1.2"/>
<g fill="#444">
<rect x="13.2" y="924.4" width="2.4" height="17.3"/><path d="M29.2 924.4V941.7L16 933Z"/>
<path d="M56.5 924.4V941.7L43.8 933Z"/><rect x="57.6" y="928.8" width="2.4" height="8.6"/>
<path d="M75.8 923.8V942.5L90.5 933.1Z"/>
<rect x="105.6" y="928.8" width="2.4" height="8.6"/><path d="M109.2 924.4V941.7L122 933Z"/>
<path d="M138.3 924.4V941.7L151.5 933Z"/><rect x="151.4" y="924.4" width="2.4" height="17.3"/>
</g>
<g><rect x="183.2" y="923.2" width="16.4" height="16.4" fill="none" stroke="#555" stroke-width="1" stroke-dasharray="2.4 1.6"/>
<rect x="182.3" y="922.3" width="2" height="2" fill="#1a7fe0"/><rect x="198.8" y="922.3" width="2" height="2" fill="#1a7fe0"/><rect x="182.3" y="938.6" width="2" height="2" fill="#1a7fe0"/>
<path d="M194.5 939.5L200 933.5" stroke="#f0b030" stroke-width="2.6"/><circle cx="200.6" cy="933" r="1.2" fill="#e84040"/>
<path d="M185.5 952.6H194.5V946" stroke="#c8c8c8" stroke-width="1.4" fill="none"/></g>
<path d="M200.2 914H214.8V919.5L208.6 925.5V953.8H206.4V925.5L200.2 919.5Z" fill="#555"/>
<polygon points="1891.20,926.21 1891.20,923.29 1896.00,923.29 1896.00,926.21 1896.70,926.50 1898.77,924.44 1902.16,927.83 1900.10,929.90 1900.39,930.60 1903.31,930.60 1903.31,935.40 1900.39,935.40 1900.10,936.10 1902.16,938.17 1898.77,941.56 1896.70,939.50 1896.00,939.79 1896.00,942.71 1891.20,942.71 1891.20,939.79 1890.50,939.50 1888.43,941.56 1885.04,938.17 1887.10,936.10 1886.81,935.40 1883.89,935.40 1883.89,930.60 1886.81,930.60 1887.10,929.90 1885.04,927.83 1888.43,924.44 1890.50,926.50" fill="#9a9a9a"/><circle cx="1893.60" cy="933.00" r="3.30" fill="#f2f2f2"/>
</svg>
<span class="t" style="left:52.67px;top:47.48px;font-size:12.5px;font-weight:bold;color:#3a3a3a;letter-spacing:-0.15px;">DESIGN</span>
<span class="t" style="left:187.91px;top:10.22px;font-size:13px;color:#0f96d6;letter-spacing:-0.45px;">SOLID</span>
<span class="t" style="left:285.42px;top:10.22px;font-size:13px;color:#3c3c3c;letter-spacing:-0.59px;">SURFACE</span>
<span class="t" style="left:400.93px;top:10.22px;font-size:13px;color:#3c3c3c;letter-spacing:-0.88px;">MESH</span>
<span class="t" style="left:492.92px;top:10.22px;font-size:13px;color:#3c3c3c;letter-spacing:-0.51px;">SHEET METAL</span>
<span class="t" style="left:634.41px;top:10.22px;font-size:13px;color:#3c3c3c;letter-spacing:-0.24px;">TOOLS</span>
<span class="t" style="left:737.73px;top:10.22px;font-size:13px;color:#3c3c3c;letter-spacing:-0.15px;">MANAGE</span>
<span class="t" style="left:293.98px;top:86.38px;font-size:12.5px;color:#3c3c3c;letter-spacing:-0.42px;">CREATE</span>
<span class="t" style="left:655.88px;top:86.38px;font-size:12.5px;color:#3c3c3c;letter-spacing:-0.06px;">MODIFY</span>
<span class="t" style="left:929.27px;top:86.38px;font-size:12.5px;color:#3c3c3c;letter-spacing:0.09px;">ASSEMBLE</span>
<span class="t" style="left:1074.58px;top:86.38px;font-size:12.5px;color:#3c3c3c;letter-spacing:-0.07px;">CONSTRUCT</span>
<span class="t" style="left:1197.95px;top:86.38px;font-size:12.5px;color:#3c3c3c;letter-spacing:-0.46px;">INSPECT</span>
<span class="t" style="left:1296.75px;top:86.38px;font-size:12.5px;color:#3c3c3c;letter-spacing:-0.23px;">INSERT</span>
<span class="t" style="left:1383.74px;top:86.38px;font-size:12.5px;color:#3c3c3c;letter-spacing:-0.35px;">SELECT</span>
<span class="t" style="left:35.53px;top:117.92px;font-size:13px;color:#5a5a5a;letter-spacing:-0.2px;">BROWSER</span>
<span class="t" style="left:122.5px;top:151.66px;font-size:13.5px;color:#3c3c3c;letter-spacing:-0.19px;">Token #07 v1</span>
<span class="t" style="left:113.39px;top:181.66px;font-size:13.5px;color:#3c3c3c;letter-spacing:-0.1px;">Document Settings</span>
<span class="t" style="left:113.39px;top:211.66px;font-size:13.5px;color:#3c3c3c;letter-spacing:0.22px;">Named Views</span>
<span class="t" style="left:144.87px;top:241.66px;font-size:13.5px;color:#3c3c3c;letter-spacing:-0.1px;">Origin</span>
<span class="t" style="left:144.89px;top:271.66px;font-size:13.5px;color:#3c3c3c;letter-spacing:0.02px;">Sketches</span>
<span class="t" style="left:144.82px;top:301.66px;font-size:13.5px;color:#3c3c3c;letter-spacing:0.02px;">Construction</span>
<span class="t" style="left:145.2px;top:331.66px;font-size:13.5px;color:#3c3c3c;letter-spacing:-0.29px;">Token 1:1</span>
<span class="t" style="left:144.93px;top:361.66px;font-size:13.5px;color:#3c3c3c;letter-spacing:-0.08px;">design/token:1</span>
<span class="t" style="left:144.61px;top:391.66px;font-size:13.5px;font-weight:bold;color:#ffffff;letter-spacing:0.2px;">Misfit #07:1</span>
<span class="t" style="left:1826.64px;top:171.22px;font-size:13px;font-weight:bold;color:#8a8a8a;letter-spacing:-0.7px;">FRONT</span>
<span class="t" style="left:1813.52px;top:120.92px;font-size:15.5px;color:#7c7cff;letter-spacing:0px;">Z</span>
<span class="t" style="left:1892.26px;top:199.12px;font-size:15.5px;color:#f27878;letter-spacing:0px;">X</span>
<span class="t" style="left:35.98px;top:873.88px;font-size:12.5px;color:#5a5a5a;letter-spacing:-0.25px;">COMMENTS</span>
<span class="t" style="left:1652.16px;top:873.36px;font-size:13.5px;font-weight:bold;color:#333333;letter-spacing:0.25px;">1 Profile | Area : 4394.373 mm^2</span>
</body></html>
